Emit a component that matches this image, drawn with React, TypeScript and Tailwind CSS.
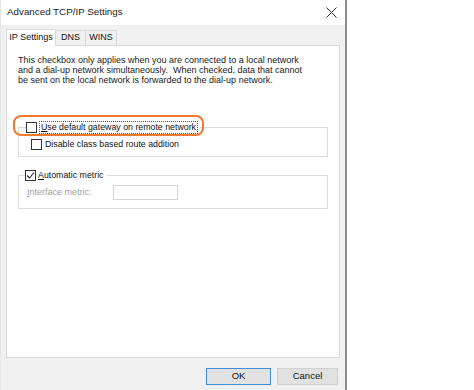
import React from 'react';

const font = { fontFamily: '"Liberation Sans", Arial, sans-serif' };

const Check = ({ checked = false }: { checked?: boolean }) => (
  <span className="flex h-[11px] w-[11px] shrink-0 items-center justify-center border border-[#333] bg-white">
    {checked && (
      <svg width="9" height="9" viewBox="0 0 9 9">
        <path d="M1 4.5 L3.5 7 L8 1.5" fill="none" stroke="#222" strokeWidth="1.1" />
      </svg>
    )}
  </span>
);

const App = () => {
  return (
    <div className="flex h-[390px] w-[474px] bg-white text-[#111]" style={font}>
      {/* dialog */}
      <div className="flex h-full w-[347px] flex-col border-r-2 border-[#8c8c8c] border-l border-l-[#e6e6e6]">
        <div className="flex h-[25px] items-center justify-between bg-white pl-[6px] pr-[8px]">
          <span className="text-[9.8px] text-[#1a1a1a]">Advanced TCP/IP Settings</span>
          <svg width="11" height="11" viewBox="0 0 11 11">
            <path d="M0.5 0.5 L10.5 10.5 M10.5 0.5 L0.5 10.5" stroke="#333" strokeWidth="1" />
          </svg>
        </div>

        <div className="flex flex-1 flex-col bg-[#f0f0f0] pl-[5px] pr-[5px] pt-[3px]">
          {/* tabs */}
          <div className="flex h-[17px] items-end text-[9px]">
            <div className="relative z-10 -mb-px flex h-[17px] w-[50px] items-center justify-center border border-b-0 border-[#d9d9d9] bg-white">
              IP Settings
            </div>
            <div className="flex h-[15px] w-[30px] items-center justify-center border border-l-0 border-b-0 border-[#d9d9d9] bg-[#f0f0f0]">
              DNS
            </div>
            <div className="flex h-[15px] w-[31px] items-center justify-center border border-l-0 border-b-0 border-[#d9d9d9] bg-[#f0f0f0]">
              WINS
            </div>
          </div>

          {/* panel */}
          <div className="h-[313px] border border-[#d9d9d9] bg-white px-[11px] pt-[9px]">
            <p className="text-[9px] leading-[10px] text-[#1a1a1a]">
              This checkbox only applies when you are connected to a local network
              <br />
              and a dial-up network simultaneously.&nbsp; When checked, data that cannot
              <br />
              be sent on the local network is forwarded to the dial-up network.
            </p>

            {/* group 1 */}
            <div className="relative mt-[42px] h-[30px] border border-[#dcdcdc]">
              <div className="absolute -top-[7px] left-[7px] flex items-center gap-[2px] bg-white pr-[2px] text-[8.8px]">
                <Check />
                <span className="border border-dotted border-[#555] px-[1px] leading-[11px]">
                  <span className="underline">U</span>se default gateway on remote network
                </span>
              </div>
              <div className="absolute -left-[6px] -top-[13px] h-[21px] w-[191px] rounded-[8px] border-2 border-[#ef7a2e]" />
              <div className="absolute left-[12px] top-[10px] flex items-center gap-[3px] text-[8.8px]">
                <Check />
                <span>Disable class based route addition</span>
              </div>
            </div>

            {/* group 2 */}
            <div className="relative mt-[18px] h-[34px] border border-[#dcdcdc]">
              <div className="absolute -top-[7px] left-[6px] flex items-center gap-[2px] bg-white pr-[3px] text-[8.8px]">
                <Check checked />
                <span>
                  <span className="underline">A</span>utomatic metric
                </span>
              </div>
              <div className="absolute left-[8px] top-[9px] flex items-center text-[9px] text-[#a0a0a0]">
                <span className="w-[86px]">
                  <span className="underline">I</span>nterface metric:
                </span>
                <span className="h-[15px] w-[65px] border border-[#d4d4d4] bg-white" />
              </div>
            </div>
          </div>

          {/* footer */}
          <div className="flex justify-end gap-[6px] pr-[2px] pt-[10px] text-[9.5px]">
            <button className="h-[17px] w-[65px] border border-[#3c8fd6] bg-[#e1e1e1]">OK</button>
            <button className="h-[17px] w-[61px] border border-[#cfcfcf] bg-[#e1e1e1]">Cancel</button>
          </div>
        </div>
      </div>
      <div className="flex-1 bg-white" />
    </div>
  );
};

export default App;
